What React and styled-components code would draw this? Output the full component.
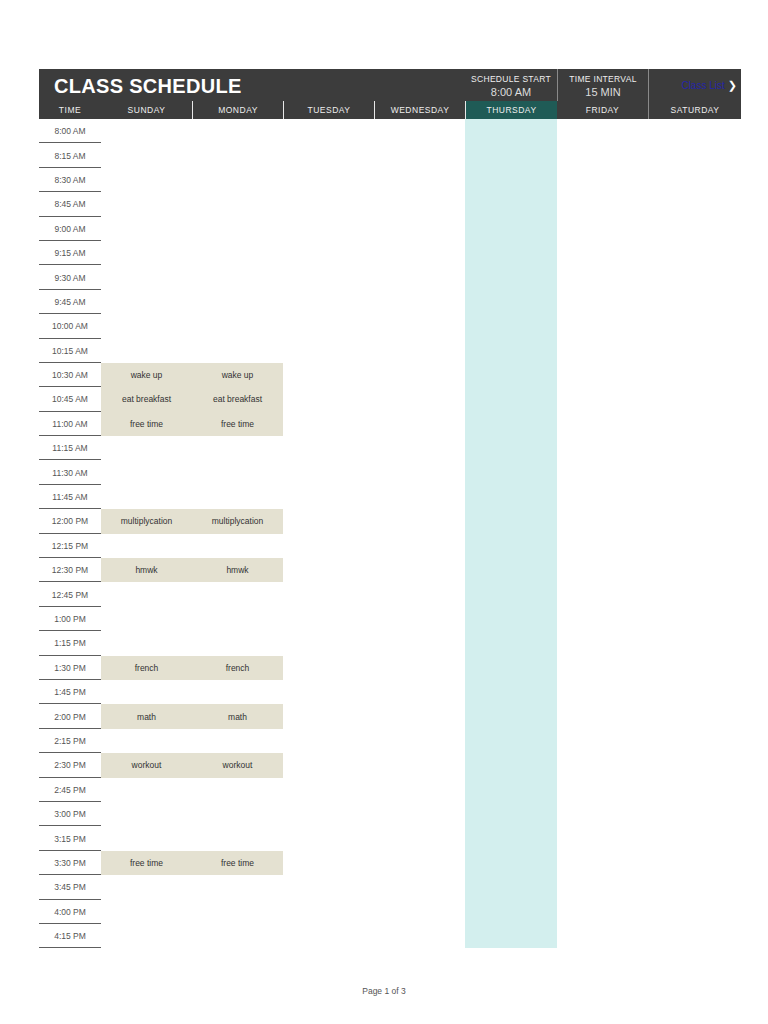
import React from 'react'
import styled, { createGlobalStyle } from 'styled-components'

const COLS = '62px 91px 91px 91px 91px 92px 91px 93px'
const DAYS = ['SUNDAY', 'MONDAY', 'TUESDAY', 'WEDNESDAY', 'THURSDAY', 'FRIDAY', 'SATURDAY']
const TODAY = 4

const events = {
  '10:30 AM': 'wake up',
  '10:45 AM': 'eat breakfast',
  '11:00 AM': 'free time',
  '12:00 PM': 'multiplycation',
  '12:30 PM': 'hmwk',
  '1:30 PM': 'french',
  '2:00 PM': 'math',
  '2:30 PM': 'workout',
  '3:30 PM': 'free time',
}

const times = []
for (let i = 0; i < 34; i++) {
  const mins = 8 * 60 + i * 15
  const h24 = Math.floor(mins / 60)
  const m = mins % 60
  const h = h24 > 12 ? h24 - 12 : h24
  times.push(`${h}:${m === 0 ? '00' : m} ${h24 >= 12 ? 'PM' : 'AM'}`)
}

const GlobalStyle = createGlobalStyle`
  body {
    margin: 0;
    background: #fff;
    font-family: "Liberation Sans", Arial, sans-serif;
  }
`

const Page = styled.div`
  width: 768px;
  padding-top: 69px;
`

const Sheet = styled.div`
  width: 702px;
  margin-left: 39px;
`

const TopBar = styled.div`
  display: grid;
  grid-template-columns: ${COLS};
  height: 32px;
  background: #3c3c3c;
`

const Title = styled.h1`
  grid-column: 1 / 6;
  margin: 0;
  padding: 3px 0 0 15px;
  color: #fff;
  font-size: 20px;
  font-weight: bold;
  letter-spacing: 0.3px;
  display: flex;
  align-items: center;
`

const InfoCell = styled.div`
  display: flex;
  flex-direction: column;
  align-items: center;
  justify-content: center;
  padding-top: 4px;
  border-left: ${p => (p.$line ? '1px solid #8a8a8a' : 'none')};
`

const InfoLabel = styled.span`
  color: #eee;
  font-size: 8.5px;
  letter-spacing: 0.3px;
  line-height: 11px;
`

const InfoValue = styled.span`
  color: #ddd;
  font-size: 11px;
  line-height: 15px;
`

const LinkCell = styled.div`
  display: flex;
  align-items: center;
  justify-content: flex-end;
  gap: 3px;
  padding: 1px 4px 0 0;
  border-left: 1px solid #8a8a8a;
`

const ClassLink = styled.a`
  color: #2424a8;
  font-family: "Liberation Sans", Arial, sans-serif;
  font-size: 10px;
  text-decoration: none;
`

const Chevron = styled.span`
  color: #fff;
  font-family: "DejaVu Sans", sans-serif;
  font-size: 11px;
  font-weight: bold;
`

const DayBar = styled.div`
  display: grid;
  grid-template-columns: ${COLS};
  height: 18px;
  background: #3c3c3c;
`

const DayLabel = styled.div`
  display: flex;
  align-items: center;
  justify-content: center;
  color: #eee;
  font-size: 8.5px;
  letter-spacing: 0.5px;
  background: ${p => (p.$today ? '#1f5b56' : 'transparent')};
  border-left: ${p =>
    p.$line === 'white' ? '1px solid #e8e8e8' : p.$line === 'gray' ? '1px solid #8a8a8a' : 'none'};
`

const Row = styled.div`
  display: grid;
  grid-template-columns: ${COLS};
  height: 24.4px;
`

const TimeCell = styled.div`
  display: flex;
  align-items: center;
  justify-content: center;
  box-sizing: border-box;
  border-bottom: 1.5px solid #5e5e5e;
  color: #555;
  font-size: 8.5px;
  padding-top: 1px;
`

const Cell = styled.div`
  display: flex;
  align-items: center;
  justify-content: center;
  color: #333;
  font-size: 8.5px;
  background: ${p => (p.$event ? '#e4e1d1' : p.$today ? '#d3efee' : 'transparent')};
`

const Footer = styled.div`
  margin-top: 38px;
  text-align: center;
  color: #555;
  font-size: 8.5px;
`

const lineFor = i => {
  if (i >= 1 && i <= 4) return 'white'
  if (i === 6) return 'gray'
  return null
}

const App = () => (
  <Page>
    <GlobalStyle />
    <Sheet>
      <TopBar>
        <Title>CLASS SCHEDULE</Title>
        <InfoCell>
          <InfoLabel>SCHEDULE START</InfoLabel>
          <InfoValue>8:00 AM</InfoValue>
        </InfoCell>
        <InfoCell $line>
          <InfoLabel>TIME INTERVAL</InfoLabel>
          <InfoValue>15 MIN</InfoValue>
        </InfoCell>
        <LinkCell>
          <ClassLink href="#">Class List</ClassLink>
          <Chevron>❯</Chevron>
        </LinkCell>
      </TopBar>
      <DayBar>
        <DayLabel>TIME</DayLabel>
        {DAYS.map((d, i) => (
          <DayLabel key={d} $today={i === TODAY} $line={lineFor(i)}>
            {d}
          </DayLabel>
        ))}
      </DayBar>
      {times.map(t => {
        const ev = events[t]
        return (
          <Row key={t}>
            <TimeCell>{t}</TimeCell>
            {DAYS.map((d, i) => {
              const has = ev && i < 2
              return (
                <Cell key={d} $today={i === TODAY} $event={has}>
                  {has ? ev : null}
                </Cell>
              )
            })}
          </Row>
        )
      })}
    </Sheet>
    <Footer>Page 1 of 3</Footer>
  </Page>
)

export default App
